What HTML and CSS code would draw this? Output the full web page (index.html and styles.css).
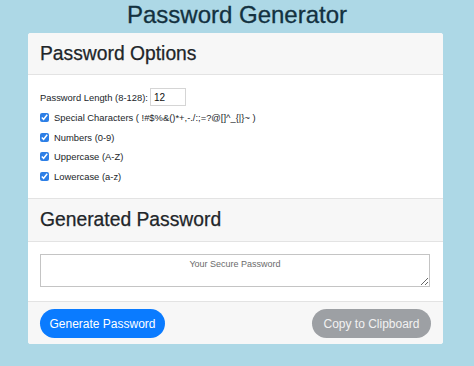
FILE: index.html
```html
<!DOCTYPE html>
<html>
<head>
<meta charset="utf-8">
<link rel="stylesheet" href="styles.css">
</head>
<body>
<h1 class="title">Password Generator</h1>
<div class="card">
  <div class="card-header"><h2>Password Options</h2></div>
  <div class="card-body options">
    <div class="row length">
      <label for="len">Password Length (8-128):</label>
      <input id="len" class="len-input" type="text" value="12">
    </div>
    <label class="row check"><input type="checkbox" checked><span>Special Characters ( !#$%&amp;()*+,-./:;=?@[]^_{|}~ )</span></label>
    <label class="row check"><input type="checkbox" checked><span>Numbers (0-9)</span></label>
    <label class="row check"><input type="checkbox" checked><span>Uppercase (A-Z)</span></label>
    <label class="row check"><input type="checkbox" checked><span>Lowercase (a-z)</span></label>
  </div>
  <div class="card-header second"><h2>Generated Password</h2></div>
  <div class="card-body output">
    <textarea class="pw" placeholder="Your Secure Password"></textarea>
  </div>
  <div class="card-footer">
    <button class="btn primary">Generate Password</button>
    <button class="btn secondary" disabled>Copy to Clipboard</button>
  </div>
</div>
</body>
</html>
```
FILE: styles.css
```css
html, body {
  margin: 0;
  padding: 0;
}
body {
  background: #add8e6;
  font-family: "Liberation Sans", Arial, sans-serif;
  color: #212529;
  height: 366px;
  overflow: hidden;
}
.title {
  margin: 0;
  height: 33px;
  line-height: 30px;
  text-align: center;
  font-size: 24px;
  font-weight: 400;
  color: #13313f;
  -webkit-text-stroke: 0.3px #13313f;
}
.card {
  margin-left: 28px;
  width: 415px;
  background: #fff;
  border-radius: 3px;
  overflow: hidden;
}
.card-header {
  background: #f7f7f7;
  height: 42px;
  border-bottom: 1px solid #e3e3e3;
  display: flex;
  align-items: center;
  padding: 0 12px;
  box-sizing: border-box;
}
.card-header.second {
  height: 44px;
  border-top: 1px solid #e3e3e3;
}
.card-header h2 {
  margin: 0;
  font-size: 19.3px;
  font-weight: 400;
  color: #212529;
  -webkit-text-stroke: 0.25px #212529;
}
.card-body {
  padding: 12px;
}
.options {
  padding: 13px 12px 12px;
  font-size: 9.4px;
  display: flex;
  flex-direction: column;
}
.row {
  display: flex;
  align-items: center;
}
.length {
  height: 18px;
  margin-bottom: 2px;
}
.length label {
  margin-right: 2px;
}
.len-input {
  width: 36px;
  height: 18px;
  box-sizing: border-box;
  border: 1px solid #d5d5d5;
  padding: 0 3px;
  font-family: inherit;
  font-size: 10px;
  color: #111;
}
.check {
  height: 19.5px;
}
.check input {
  width: 9px;
  height: 9px;
  margin: 0 5px 0 0;
  accent-color: #2d7fe6;
}
.output {
  padding: 12px 12px 14px;
}
.pw {
  display: block;
  width: 390px;
  height: 33px;
  box-sizing: border-box;
  border: 1px solid #c4c4c4;
  text-align: center;
  font-family: inherit;
  font-size: 9px;
  padding: 4px 3px;
  resize: vertical;
}
.pw::placeholder {
  color: #6b6b6b;
}
.card-footer {
  background: #f7f7f7;
  border-top: 1px solid #e3e3e3;
  padding: 7px 12px 6px;
  display: flex;
  justify-content: space-between;
}
.btn {
  height: 29px;
  border: none;
  border-radius: 15px;
  font-family: inherit;
  font-size: 12px;
  padding: 0;
  white-space: nowrap;
  color: #fff;
}
.primary {
  background: #0a7bff;
  width: 125px;
}
.secondary {
  background: #9da0a4;
  width: 119px;
  color: #f2f2f2;
}
```
